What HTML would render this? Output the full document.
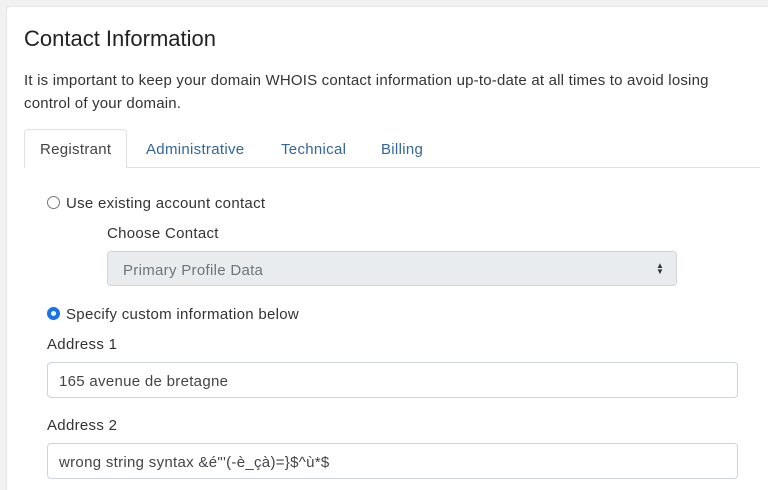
<!DOCTYPE html>
<html><head><style>
html,body{margin:0;width:768px;height:490px;overflow:hidden}
body{background:#f1f1f1;font-family:"Liberation Sans",sans-serif;color:#333;position:relative}
.card{position:absolute;left:6px;top:6px;width:800px;height:500px;background:#fff;border:1px solid #e5e5e5;border-radius:4px}
.a{position:absolute;white-space:nowrap;letter-spacing:0.3px}
h1{position:absolute;left:24px;top:26px;margin:0;font-weight:normal;font-size:22px;color:#222}
p{position:absolute;left:24px;top:69px;margin:0;font-size:15px;line-height:23px;width:712px;color:#333;letter-spacing:0.2px}
.tabline{position:absolute;left:24px;top:167px;width:736px;border-top:1px solid #dee2e6}
.tab{position:absolute;left:24px;top:129px;width:103px;height:39px;border:1px solid #dee2e6;border-bottom:none;border-radius:4px 4px 0 0;background:#fff;box-sizing:border-box}
.t{font-size:15px;top:141px}
.lnk{color:#336699}
.radio{position:absolute;width:11px;height:11px;border:1px solid #777;border-radius:50%}
.sel{position:absolute;left:107px;top:251px;width:570px;height:35px;background:#e9ecef;border:1px solid #ced4da;border-radius:4px;box-sizing:border-box}
.inp{position:absolute;left:47px;width:691px;height:36px;border:1px solid #ced4da;border-radius:4px;box-sizing:border-box;background:#fff}
.f{font-size:15px}
</style></head><body>
<div class="card"></div>
<h1>Contact Information</h1>
<p>It is important to keep your domain WHOIS contact information up-to-date at all times to avoid losing control of your domain.</p>
<div class="tabline"></div>
<div class="tab"></div>
<div class="a t" style="left:40px;color:#444">Registrant</div>
<div class="a t lnk" style="left:146px">Administrative</div>
<div class="a t lnk" style="left:281px">Technical</div>
<div class="a t lnk" style="left:381px">Billing</div>
<div class="radio" style="left:47px;top:196px"></div>
<div class="a f" style="left:66px;top:195px">Use existing account contact</div>
<div class="a f" style="left:107px;top:225px">Choose Contact</div>
<div class="sel"></div>
<div class="a f" style="left:123px;top:262px;color:#6c757d">Primary Profile Data</div>
<div class="a" style="left:656px;top:263px;font-size:8px;line-height:6px;color:#333">▲<br>▼</div>
<div class="radio" style="left:47px;top:307px;border:4px solid #1a73e8;width:5px;height:5px"></div>
<div class="a f" style="left:66px;top:306px">Specify custom information below</div>
<div class="a f" style="left:47px;top:336px">Address 1</div>
<div class="inp" style="top:362px"></div>
<div class="a f" style="left:59px;top:373px;color:#444">165 avenue de bretagne</div>
<div class="a f" style="left:47px;top:417px">Address 2</div>
<div class="inp" style="top:443px"></div>
<div class="a f" style="left:59px;top:454px;color:#444">wrong string syntax &amp;é"'(-è_çà)=}$^ù*$</div>
</body></html>
